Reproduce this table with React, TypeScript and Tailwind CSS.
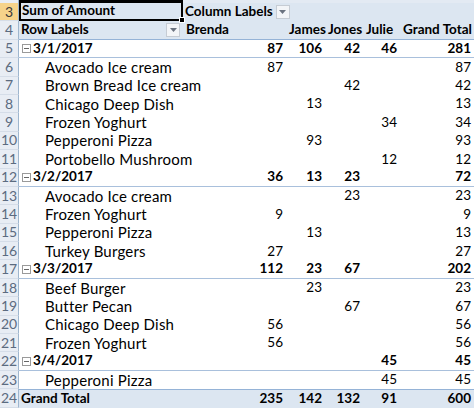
import React from "react";

type Row = {
  n: number;
  kind: "date" | "item" | "total";
  label: string;
  vals: (number | null)[];
};

const _ = null;

const rows: Row[] = [
  { n: 5, kind: "date", label: "3/1/2017", vals: [87, 106, 42, 46, 281] },
  { n: 6, kind: "item", label: "Avocado Ice cream", vals: [87, _, _, _, 87] },
  { n: 7, kind: "item", label: "Brown Bread Ice cream", vals: [_, _, 42, _, 42] },
  { n: 8, kind: "item", label: "Chicago Deep Dish", vals: [_, 13, _, _, 13] },
  { n: 9, kind: "item", label: "Frozen Yoghurt", vals: [_, _, _, 34, 34] },
  { n: 10, kind: "item", label: "Pepperoni Pizza", vals: [_, 93, _, _, 93] },
  { n: 11, kind: "item", label: "Portobello Mushroom", vals: [_, _, _, 12, 12] },
  { n: 12, kind: "date", label: "3/2/2017", vals: [36, 13, 23, _, 72] },
  { n: 13, kind: "item", label: "Avocado Ice cream", vals: [_, _, 23, _, 23] },
  { n: 14, kind: "item", label: "Frozen Yoghurt", vals: [9, _, _, _, 9] },
  { n: 15, kind: "item", label: "Pepperoni Pizza", vals: [_, 13, _, _, 13] },
  { n: 16, kind: "item", label: "Turkey Burgers", vals: [27, _, _, _, 27] },
  { n: 17, kind: "date", label: "3/3/2017", vals: [112, 23, 67, _, 202] },
  { n: 18, kind: "item", label: "Beef Burger", vals: [_, 23, _, _, 23] },
  { n: 19, kind: "item", label: "Butter Pecan", vals: [_, _, 67, _, 67] },
  { n: 20, kind: "item", label: "Chicago Deep Dish", vals: [56, _, _, _, 56] },
  { n: 21, kind: "item", label: "Frozen Yoghurt", vals: [56, _, _, _, 56] },
  { n: 22, kind: "date", label: "3/4/2017", vals: [_, _, _, 45, 45] },
  { n: 23, kind: "item", label: "Pepperoni Pizza", vals: [_, _, _, 45, 45] },
  { n: 24, kind: "total", label: "Grand Total", vals: [235, 142, 132, 91, 600] },
];

// widths of the five value columns (Brenda, James, Jones, Julie, Grand Total)
const colW = ["w-[103px]", "w-[39px]", "w-[38px]", "w-[37px]", "w-[74px]"];

function RowNum({ n, active }: { n: number; active?: boolean }) {
  return (
    <div
      className={
        "w-[19px] shrink-0 h-full flex items-center justify-center border-r border-b border-r-[#9eb6ce] border-b-[#d5dde8] text-[14px] " +
        (active ? "bg-[#f6d38a] text-[#3b3b3b]" : "bg-[#e8edf4] text-[#5b6b80]")
      }
    >
      {n}
    </div>
  );
}

function Dropdown() {
  return (
    <span className="w-[14px] h-[14px] flex items-center justify-center border border-[#c6ccd4] bg-[#f3f5f8]">
      <svg width="7" height="4" viewBox="0 0 7 4">
        <path d="M0 0h7L3.5 4z" fill="#6b7380" />
      </svg>
    </span>
  );
}

function Collapse() {
  return (
    <span className="w-[9px] h-[9px] mr-[2px] flex items-center justify-center border border-[#9a9a9a] bg-white">
      <span className="w-[5px] h-px bg-[#666]" />
    </span>
  );
}

export default function App() {
  return (
    <div className="w-[474px] h-[408px] overflow-hidden bg-white text-[13.5px] text-black font-['Lato','Open_Sans',sans-serif] leading-none">
      {/* partial row above */}
      <div className="flex h-[3px]">
        <div className="w-[19px] shrink-0 bg-[#e8edf4] border-r border-[#9eb6ce]" />
        <div className="w-[164px] bg-black" />
        <div className="flex-1 bg-[#e3eaf3]" />
      </div>

      {/* row 3 */}
      <div className="flex h-[18.4px] bg-[#dce6f1]">
        <RowNum n={3} active />
        <div className="relative w-[164px] shrink-0 h-full border-x-2 border-b-2 border-black flex items-center pl-[1px] font-bold">
          Sum of Amount
          <span className="absolute -right-[4px] -bottom-[4px] w-[6px] h-[6px] bg-black border border-white" />
        </div>
        <div className="flex items-center pl-[2px] gap-[3px] font-bold whitespace-nowrap">
          Column Labels
          <Dropdown />
        </div>
      </div>

      {/* row 4 */}
      <div className="flex h-[18.4px] bg-[#dce6f1]">
        <RowNum n={4} />
        <div className="w-[164px] shrink-0 h-full flex items-center justify-between pl-[2px] pr-[3px] font-bold border-b border-[#95b3d7]">
          Row Labels
          <Dropdown />
        </div>
        {["Brenda", "James", "Jones", "Julie", "Grand Total"].map((h, i) => (
          <div
            key={h}
            className={colW[i] + " shrink-0 h-full flex items-center pl-[3px] font-bold whitespace-nowrap border-b border-[#95b3d7]"}
          >
            {h}
          </div>
        ))}
      </div>

      {rows.map((r) => {
        const bold = r.kind !== "item";
        const line =
          r.kind === "date"
            ? "border-b border-[#a9c0dc]"
            : r.kind === "total"
            ? "bg-[#dce6f1] border-t border-[#95b3d7]"
            : "";
        return (
          <div key={r.n} className="flex h-[18.4px]">
            <RowNum n={r.n} />
            <div className={"flex flex-1 h-full " + line + (bold ? " font-bold" : "")}>
              <div
                className={
                  "w-[164px] shrink-0 flex items-center whitespace-nowrap " +
                  (r.kind === "item" ? "pl-[26px] text-[15px] tracking-[0.2px]" : r.kind === "date" ? "pl-[3px]" : "pl-[2px]")
                }
              >
                {r.kind === "date" && <Collapse />}
                {r.label}
              </div>
              {r.vals.map((v, i) => (
                <div key={i} className={colW[i] + " shrink-0 flex items-center justify-end pr-[3px]"}>
                  {v ?? ""}
                </div>
              ))}
            </div>
          </div>
        );
      })}
    </div>
  );
}
